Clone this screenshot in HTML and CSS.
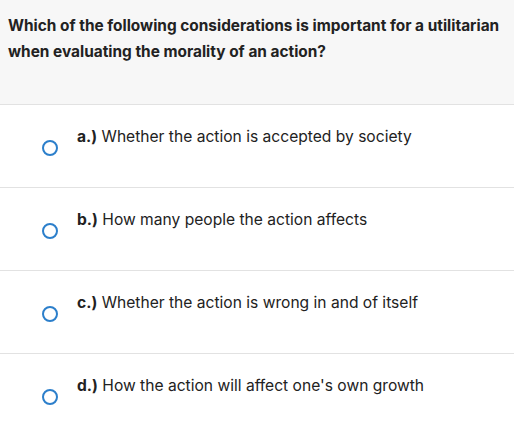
FILE: index.html
```html
<!DOCTYPE html>
<html>
<head>
<meta charset="utf-8">
<link rel="stylesheet" href="styles.css">
</head>
<body>
<div class="quiz">
  <div class="question">
    <p class="q-text">Which of the following considerations is important for a utilitarian when evaluating the morality of an action?</p>
  </div>
  <ul class="options">
    <li class="option"><span class="radio"></span><span class="label"><b>a.)</b> Whether the action is accepted by society</span></li>
    <li class="option"><span class="radio"></span><span class="label"><b>b.)</b> How many people the action affects</span></li>
    <li class="option"><span class="radio"></span><span class="label"><b>c.)</b> Whether the action is wrong in and of itself</span></li>
    <li class="option"><span class="radio"></span><span class="label"><b>d.)</b> How the action will affect one's own growth</span></li>
  </ul>
</div>
</body>
</html>
```

FILE: styles.css
```css
html, body {
  margin: 0;
  padding: 0;
  background: #ffffff;
}
body {
  font-family: "Inter", "Liberation Sans", sans-serif;
  color: #1c1c1c;
}
.quiz {
  width: 514px;
}
.question {
  background: #f7f7f7;
  border-bottom: 1px solid #e2e2e2;
  height: 104px;
  box-sizing: content-box;
  padding: 0 8px;
}
.q-text {
  margin: 0;
  padding-top: 13px;
  font-size: 15.4px;
  font-weight: 700;
  line-height: 26px;
  color: #222222;
}
.options {
  list-style: none;
  margin: 0;
  padding: 0;
}
.option {
  display: flex;
  align-items: flex-start;
  height: 82px;
  border-bottom: 1px solid #e2e2e2;
  box-sizing: content-box;
}
.radio {
  width: 12px;
  height: 12px;
  border: 2px solid #2c7fcb;
  border-radius: 50%;
  margin: 35px 0 0 42px;
  flex: none;
}
.label {
  margin: 22px 0 0 19px;
  font-size: 15.6px;
  line-height: 20px;
  color: #222222;
}
.label b {
  font-weight: 700;
}
```
